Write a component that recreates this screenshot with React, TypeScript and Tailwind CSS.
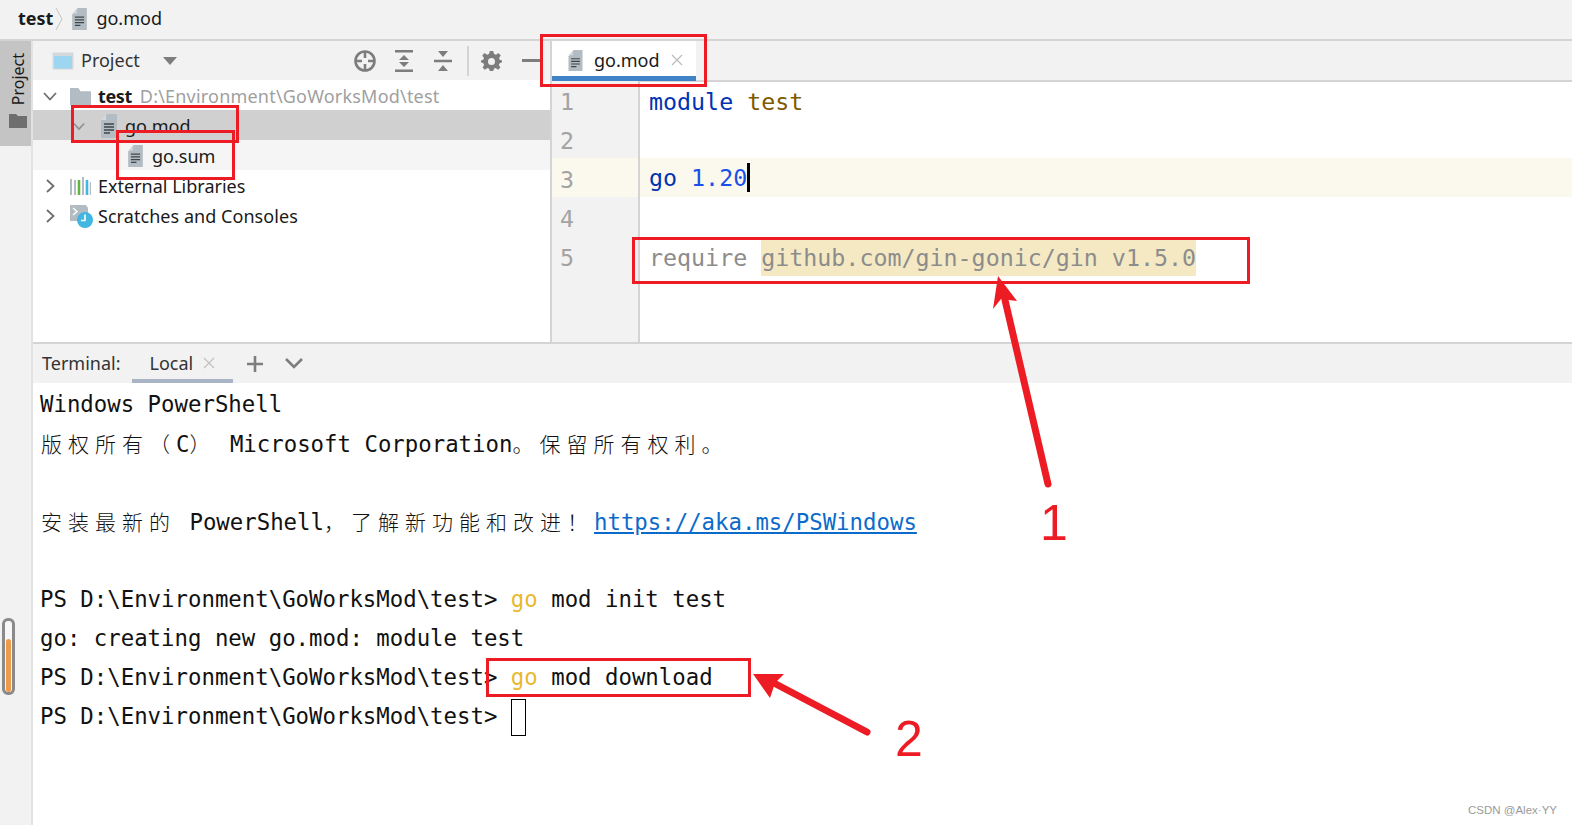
import React from "react";

const ui = "font-['Noto_Sans','Open_Sans',sans-serif]";
const mono = "font-['DejaVu_Sans_Mono','Noto_Sans_CJK_SC',monospace]";

function FileIcon({ className = "" }: { className?: string }) {
  return (
    <svg viewBox="0 0 16 24" className={className}>
      <path d="M6 0H16V24H0V7Z" fill="#b3bcc3" />
      <path d="M5 0.5V6H0.5Z" fill="#d5d9dc" />
      <path d="M3 10H13M3 13H13M3 16H13M3 19H9" stroke="#3f4549" strokeWidth="1.4" />
    </svg>
  );
}

function Chevron({ open }: { open?: boolean }) {
  return (
    <svg viewBox="0 0 14 14" className="h-[14px] w-[14px]" fill="none" stroke="#6e6e6e" strokeWidth="1.8">
      {open ? <path d="M1 4L7 10.5L13 4" /> : <path d="M4 1L10.5 7L4 13" />}
    </svg>
  );
}

function Toolbar() {
  return (
    <div className="ml-[176px] flex items-center">
      <svg viewBox="0 0 24 24" className="h-[24px] w-[24px]" fill="none" stroke="#7d7d7d" strokeWidth="2.6">
        <circle cx="12" cy="12" r="9.5" />
        <path d="M12 2V9M12 15V22M2 12H9M15 12H22" />
      </svg>
      <svg viewBox="0 0 20 24" className="ml-[17px] h-[24px] w-[20px]" fill="#7d7d7d">
        <path d="M1 1H19V3.5H1ZM1 20.5H19V23H1ZM10 6L15 11H5ZM10 18L5 13H15Z" />
      </svg>
      <svg viewBox="0 0 20 24" className="ml-[19px] h-[24px] w-[20px]" fill="#7d7d7d">
        <path d="M1 10.8H19V13.2H1ZM5 2H15L10 8ZM10 16L15 22H5Z" />
      </svg>
      <div className="ml-[14px] h-[30px] w-[2px] bg-[#d4d4d4]" />
      <svg viewBox="0 0 24 24" className="ml-[12px] h-[21px] w-[21px]" fill="#7d7d7d">
        <path d="M10 1H14L14.7 4.4L17 5.4L20 3.5L22.6 6.3L20.6 9.2L21.5 11L24 12V14L21.3 15L20.4 17L22.2 20L19.6 22.5L16.7 20.6L14.7 21.5L14 24H10L9.3 21.5L7.3 20.6L4.4 22.5L1.8 20L3.6 17L2.7 15L0 14V12L2.5 11L3.4 9.2L1.4 6.3L4 3.5L7 5.4L9.3 4.4ZM12 9A4 4 0 1 0 12 17A4 4 0 1 0 12 9Z" fillRule="evenodd" />
      </svg>
      <div className="ml-[20px] h-[3px] w-[20px] bg-[#7d7d7d]" />
    </div>
  );
}

function TreeRow({ className = "", children }: { className?: string; children: React.ReactNode }) {
  return <div className={`flex h-[30px] items-center whitespace-nowrap ${className}`}>{children}</div>;
}

function ProjectPanel() {
  return (
    <div className={`flex h-full w-[519px] shrink-0 flex-col border-r-2 border-[#d4d4d4] bg-white ${ui} text-[#1a1a1a]`}>
      <div className="flex h-[39px] shrink-0 items-center overflow-hidden bg-[#f2f2f2]">
        <svg viewBox="0 0 22 18" className="ml-[19px] h-[18px] w-[22px] shrink-0">
          <rect x="0.5" y="0.5" width="21" height="17" fill="#d5d8da" />
          <rect x="2" y="4" width="18" height="12.5" fill="#9cd6f0" />
        </svg>
        <span className="ml-[7px] text-[18px] text-[#333]">Project</span>
        <svg viewBox="0 0 14 8" className="ml-[23px] h-[8px] w-[14px] shrink-0" fill="#7d7d7d"><path d="M0 0H14L7 8Z" /></svg>
        <Toolbar />
      </div>
      <TreeRow className="pl-[10px] pt-[2px]">
        <Chevron open />
        <svg viewBox="0 0 20 16" className="ml-[13px] h-[17px] w-[21px]" fill="#b3bcc3"><path d="M0 0H8L10 3H20V16H0Z" /></svg>
        <span className="ml-[7px] text-[18px] font-bold tracking-[-0.4px]">test</span>
        <span className="ml-[8px] text-[18px] tracking-[0.2px] text-[#a0a0a0]">D:\Environment\GoWorksMod\test</span>
      </TreeRow>
      <TreeRow className="bg-[#d0d0d0] pl-[40px] pt-[2px]">
        <svg viewBox="0 0 14 14" className="h-[12px] w-[12px]" fill="none" stroke="#8f8f8f" strokeWidth="1.8"><path d="M1 4L7 10.5L13 4" /></svg>
        <FileIcon className="ml-[16px] h-[24px] w-[16px]" />
        <span className="ml-[8px] text-[18px]">go.mod</span>
      </TreeRow>
      <TreeRow className="bg-[#f5f5f5] pl-[95px] pt-[2px]">
        <FileIcon className="h-[22px] w-[15px]" />
        <span className="ml-[9px] text-[18px]">go.sum</span>
      </TreeRow>
      <TreeRow className="pl-[10px] pt-[2px]">
        <Chevron />
        <svg viewBox="0 0 21 18" className="ml-[13px] h-[18px] w-[21px]">
          <path d="M1 2V18" stroke="#b3bcc3" strokeWidth="2" />
          <path d="M5 3V18" stroke="#b3bcc3" strokeWidth="2" />
          <path d="M9 3V18" stroke="#62b543" strokeWidth="2.6" />
          <path d="M13 0V18" stroke="#b3bcc3" strokeWidth="2" />
          <path d="M17 3V18" stroke="#40b6e0" strokeWidth="2.6" />
          <path d="M20.5 5V18" stroke="#b3bcc3" strokeWidth="1.4" />
        </svg>
        <span className="ml-[7px] text-[18px]">External Libraries</span>
      </TreeRow>
      <TreeRow className="pl-[10px] pt-[2px]">
        <Chevron />
        <svg viewBox="0 0 23 23" className="ml-[13px] h-[23px] w-[23px]">
          <path d="M0 0H16L18 3V9H10V16H0Z" fill="#b3bcc3" />
          <path d="M3 3L7 6.5L3 10" fill="none" stroke="#fff" strokeWidth="1.4" />
          <circle cx="15" cy="15" r="8" fill="#40b6e0" />
          <path d="M15 9.5V15.5H11" fill="none" stroke="#fff" strokeWidth="1.6" />
        </svg>
        <span className="ml-[5px] text-[18px] tracking-[0.05px]">Scratches and Consoles</span>
      </TreeRow>
    </div>
  );
}

function Gutter({ n, active }: { n: number; active?: boolean }) {
  return (
    <div className={`h-[39px] pl-[8px] leading-[43px] text-[#a3a3a3] ${active ? "bg-[#fbf9ed]" : "bg-[#f2f2f2]"}`}>{n}</div>
  );
}

function Editor() {
  return (
    <div className="flex h-full min-w-0 flex-1 flex-col">
      <div className={`relative z-10 h-[39px] shrink-0 bg-[#f2f2f2] ${ui}`}>
        <div className="flex h-[40px] w-[144px] items-center border-b-[5px] border-[#4083c9] bg-white pl-[16px] pt-[3px]">
          <FileIcon className="h-[21px] w-[15px]" />
          <span className="ml-[11px] text-[18px] text-[#1a1a1a]">go.mod</span>
          <svg viewBox="0 0 12 12" className="ml-[11px] h-[12px] w-[12px]" fill="none" stroke="#bdbdbd" strokeWidth="1.3"><path d="M1 1L11 11M11 1L1 11" /></svg>
        </div>
      </div>
      <div className={`flex min-h-0 flex-1 border-t-2 border-[#d4d4d4] bg-white ${mono} text-[23.3px]`}>
        <div className="w-[88px] shrink-0 border-r-2 border-[#d4d4d4] bg-[#f2f2f2]">
          <div className="-mt-[2px]"><Gutter n={1} /><Gutter n={2} /><Gutter n={3} active /><Gutter n={4} /><Gutter n={5} /></div>
        </div>
        <div className="min-w-0 flex-1 whitespace-pre">
          <div className="-mt-[2px]">
            <div className="h-[39px] pl-[9px] leading-[43px]"><span className="text-[#0033b3]">module</span> <span className="text-[#7f5a00]">test</span></div>
            <div className="h-[39px]" />
            <div className="flex h-[39px] items-center bg-[#fbf9ed] pl-[9px]">
              <span className="leading-[45px]"><span className="text-[#0033b3]">go</span> <span className="text-[#1750eb]">1.20</span></span>
              <span className="h-[29px] w-[3px] bg-black" />
            </div>
            <div className="h-[39px]" />
            <div className="flex h-[40px] items-end pl-[9px] text-[#8c8c8c]">
              <span className="leading-[36px]">require </span><span className="flex h-[36px] items-center bg-[#f5e9c4]">github.com/gin-gonic/gin v1.5.0</span>
            </div>
          </div>
        </div>
      </div>
    </div>
  );
}

function Han({ children }: { children: string }) {
  return <span className="font-['Noto_Sans_CJK_SC',sans-serif] text-[21px] font-light tracking-[6px]">{children}</span>;
}

function Row({ children }: { children?: React.ReactNode }) {
  return <div className="h-[39px] whitespace-pre pl-[7px] leading-[39px]">{children}</div>;
}

const Go = () => <span className="text-[#e8b92f]">go</span>;

function Terminal() {
  return (
    <div className="flex min-h-0 flex-1 flex-col bg-white">
      <div className={`flex h-[39px] shrink-0 items-center bg-[#f2f2f2] ${ui} text-[18px] text-[#333]`}>
        <span className="ml-[9px]">Terminal:</span>
        <div className="ml-[11px] flex h-[39px] w-[101px] items-center border-b-[4px] border-[#a9b4c4] pl-[18px] pt-[3px]">
          <span>Local</span>
          <svg viewBox="0 0 12 12" className="ml-[10px] h-[12px] w-[12px]" fill="none" stroke="#c4c4c4" strokeWidth="1.4"><path d="M1 1L11 11M11 1L1 11" /></svg>
        </div>
        <svg viewBox="0 0 16 16" className="ml-[14px] h-[16px] w-[16px]" fill="none" stroke="#7d7d7d" strokeWidth="2.6"><path d="M8 0V16M0 8H16" /></svg>
        <svg viewBox="0 0 18 11" className="ml-[22px] h-[11px] w-[18px]" fill="none" stroke="#7d7d7d" strokeWidth="2.6"><path d="M1 1L9 9L17 1" /></svg>
      </div>
      <div className={`pt-[2px] ${mono} text-[22.35px] text-[#111]`}>
        <Row>Windows PowerShell</Row>
        <Row><span className="pl-[1px]" /><Han>版权所有（</Han>C<Han>）</Han> Microsoft Corporation<Han>。保留所有权利。</Han></Row>
        <Row />
        <Row><span className="pl-[1px]" /><Han>安装最新的</Han> PowerShell<Han>，了解新功能和改进！</Han><span className="text-[#0b6bcb] underline">https://aka.ms/PSWindows</span></Row>
        <Row />
        <Row>PS D:\Environment\GoWorksMod\test&gt; <Go /> mod init test</Row>
        <Row>go: creating new go.mod: module test</Row>
        <Row>PS D:\Environment\GoWorksMod\test&gt; <Go /> mod download</Row>
        <Row>PS D:\Environment\GoWorksMod\test&gt; <span className="inline-block h-[37px] w-[15px] border-[1.5px] border-black align-middle" /></Row>
      </div>
    </div>
  );
}

function RedBox({ className }: { className: string }) {
  return <div className={`absolute z-20 border-[3px] border-[#ed1c24] ${className}`} />;
}

export default function App() {
  return (
    <div className="relative flex h-[825px] w-[1572px] flex-col overflow-hidden bg-white">
      <div className={`flex h-[39px] shrink-0 items-center bg-[#f2f2f2] pb-[2px] ${ui} text-[18px] text-[#1a1a1a]`}>
        <span className="ml-[18px] font-bold">test</span>
        <svg viewBox="0 0 8 24" className="ml-[2px] h-[24px] w-[8px]" fill="none" stroke="#c4c4c4" strokeWidth="1"><path d="M1 1L7 12L1 23" /></svg>
        <FileIcon className="ml-[9px] h-[22px] w-[15px]" />
        <span className="ml-[9px]">go.mod</span>
      </div>
      <div className="flex min-h-0 flex-1 border-t-2 border-[#d4d4d4]">
        <div className="flex w-[33px] shrink-0 flex-col border-r-2 border-[#e2e2e2] bg-[#f2f2f2]">
          <div className={`flex h-[105px] w-[31px] flex-col items-center bg-[#c4c4c4] pl-[4px] pt-[12px] ${ui}`}>
            <span className="rotate-180 text-[16px] leading-[20px] text-[#1a1a1a] [writing-mode:vertical-rl]">Project</span>
            <svg viewBox="0 0 18 14" className="mt-[9px] h-[14px] w-[18px]" fill="#6e6e6e"><path d="M0 0H7L9 2H18V14H0Z" /></svg>
          </div>
          <div className="relative ml-[2px] mt-[472px] h-[77px] w-[13px] rounded-[6px] border-[3px] border-[#8a8a8a] bg-[#f7f7f7]">
            <div className="absolute bottom-0 left-[1px] right-[1px] h-[53px] rounded-[3px] bg-[#ef9a4a]" />
          </div>
        </div>
        <div className="flex min-w-0 flex-1 flex-col">
          <div className="flex h-[303px] shrink-0 border-b-2 border-[#d4d4d4]">
            <ProjectPanel />
            <Editor />
          </div>
          <Terminal />
        </div>
      </div>

      <RedBox className="left-[71px] top-[105px] h-[38px] w-[168px]" />
      <RedBox className="left-[116px] top-[130px] h-[50px] w-[119px]" />
      <RedBox className="left-[540px] top-[34px] h-[53px] w-[167px]" />
      <RedBox className="left-[632px] top-[237px] h-[47px] w-[618px]" />
      <RedBox className="left-[486px] top-[658px] h-[39px] w-[265px]" />

      <svg className="absolute left-0 top-0 z-20 h-[825px] w-[1572px]" viewBox="0 0 1572 825" fill="none">
        <path d="M1048 484L1005 300" stroke="#ed1c24" strokeWidth="7" strokeLinecap="round" />
        <path d="M998 276L1017 301L1001 299L993 309Z" fill="#ed1c24" />
        <path d="M867 732L772 682" stroke="#ed1c24" strokeWidth="7" strokeLinecap="round" />
        <path d="M753 674L784 674L775 683L770 698Z" fill="#ed1c24" />
      </svg>
      <span className="absolute left-[1040px] top-[494px] font-['Liberation_Sans',sans-serif] text-[50px] leading-[58px] text-[#ed1c24]">1</span>
      <span className="absolute left-[895px] top-[710px] font-['Liberation_Sans',sans-serif] text-[50px] leading-[58px] text-[#ed1c24]">2</span>
      <span className="absolute left-[1468px] top-[802px] font-['Liberation_Sans',sans-serif] text-[11.5px] leading-[16px] text-[#9a9a9a]">CSDN @Alex·YY</span>
    </div>
  );
}
